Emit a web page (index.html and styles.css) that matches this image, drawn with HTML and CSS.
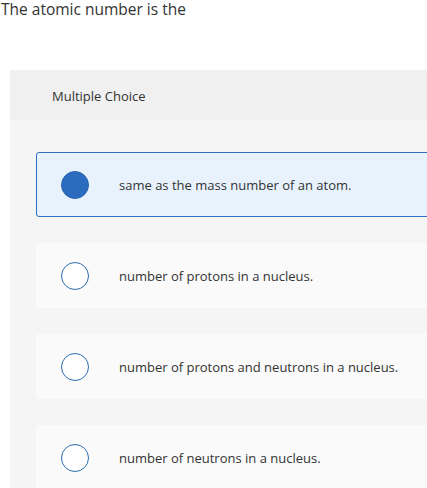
FILE: index.html
```html
<!DOCTYPE html>
<html>
<head>
<meta charset="utf-8">
<link rel="stylesheet" href="styles.css">
</head>
<body>
<p class="prompt">The atomic number is the</p>
<section class="panel">
  <div class="panel-head">Multiple Choice</div>
  <div class="choices">
    <div class="choice selected"><span class="radio"></span><span class="label">same as the mass number of an atom.</span></div>
    <div class="choice"><span class="radio"></span><span class="label">number of protons in a nucleus.</span></div>
    <div class="choice"><span class="radio"></span><span class="label">number of protons and neutrons in a nucleus.</span></div>
    <div class="choice"><span class="radio"></span><span class="label">number of neutrons in a nucleus.</span></div>
  </div>
</section>
</body>
</html>
```
FILE: styles.css
```css
html, body {
  margin: 0;
  padding: 0;
  background: #fff;
  overflow: hidden;
}
body {
  font-family: "Open Sans", Lato, sans-serif;
  color: #333;
  width: 427px;
  height: 488px;
}
.prompt {
  margin: 0;
  padding: 0 0 0 1px;
  font-size: 15.5px;
  line-height: 18px;
  height: 70px;
  box-sizing: border-box;
  color: #333;
}
.panel {
  margin-left: 10px;
  background: #f5f5f5;
  height: 418px;
  overflow: hidden;
}
.panel-head {
  background: #f0f0f0;
  height: 50px;
  box-sizing: border-box;
  padding: 18px 0 0 42px;
  font-size: 13px;
  line-height: 16px;
  color: #333;
}
.choices {
  display: flex;
  flex-direction: column;
  gap: 26px;
  padding: 32px 0 0 26px;
}
.choice {
  display: flex;
  align-items: center;
  height: 65px;
  width: 420px;
  box-sizing: border-box;
  background: #fafafa;
  border-radius: 3px;
  padding-left: 25px;
  font-size: 13px;
  color: #333;
  flex: none;
}
.choice.selected {
  background: #e8f2fc;
  border: 1px solid #2d6fc0;
  padding-left: 24px;
}
.radio {
  width: 28px;
  height: 28px;
  box-sizing: border-box;
  border-radius: 50%;
  border: 1.5px solid #2b6cae;
  background: #fff;
  flex: none;
}
.selected .radio {
  background: #2b6cbf;
  border-color: #2a66b0;
}
.label {
  margin-left: 30px;
}
```
